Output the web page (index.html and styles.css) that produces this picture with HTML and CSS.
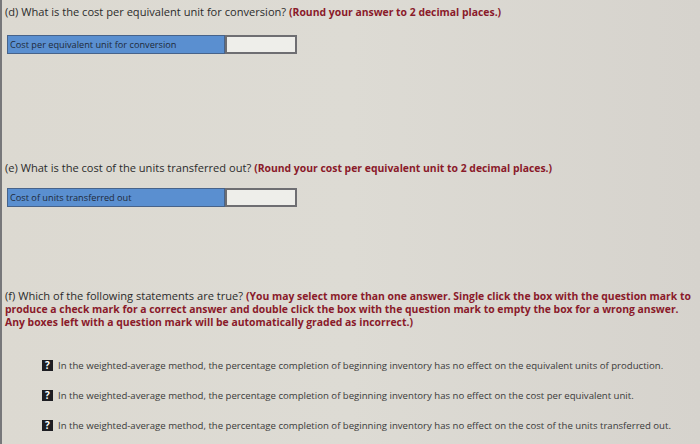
FILE: index.html
```html
<!DOCTYPE html>
<html>
<head>
<meta charset="utf-8">
<link rel="stylesheet" href="styles.css">
</head>
<body>
<div class="page">
  <section class="part part-d">
    <p class="q">(d) What is the cost per equivalent unit for conversion? <b class="note">(Round your answer to 2 decimal places.)</b></p>
    <div class="answer"><div class="label">Cost per equivalent unit for conversion</div><div class="field"></div></div>
  </section>
  <section class="part part-e">
    <p class="q">(e) What is the cost of the units transferred out? <b class="note">(Round your cost per equivalent unit to 2 decimal places.)</b></p>
    <div class="answer"><div class="label">Cost of units transferred out</div><div class="field"></div></div>
  </section>
  <section class="part part-f">
    <p class="q">(f) Which of the following statements are true? <b class="note">(You may select more than one answer. Single click the box with the question mark to produce a check mark for a correct answer and double click the box with the question mark to empty the box for a wrong answer. Any boxes left with a question mark will be automatically graded as incorrect.)</b></p>
    <ul class="choices">
      <li><span class="qbox">?</span>In the weighted-average method, the percentage completion of beginning inventory has no effect on the equivalent units of production.</li>
      <li><span class="qbox">?</span>In the weighted-average method, the percentage completion of beginning inventory has no effect on the cost per equivalent unit.</li>
      <li><span class="qbox">?</span>In the weighted-average method, the percentage completion of beginning inventory has no effect on the cost of the units transferred out.</li>
    </ul>
  </section>
</div>
</body>
</html>
```
FILE: styles.css
```css
html, body {
  margin: 0;
  padding: 0;
}
body {
  width: 700px;
  height: 444px;
  overflow: hidden;
  background: linear-gradient(90deg, #dcd9d1 0%, #dddbd4 50%, #d6d3cd 100%);
  font-family: "Open Sans", "Liberation Sans", sans-serif;
  color: #2b2b2b;
}
.page {
  height: 444px;
  border-left: 2px solid #77777a;
  padding-left: 3px;
  box-sizing: border-box;
}
.q {
  margin: 0;
  font-size: 11.1px;
  line-height: 13px;
  letter-spacing: 0;
}
.note {
  color: #8a1a2a;
  font-weight: 700;
  font-size: 10.4px;
  line-height: 11px;
}
.part-d { padding-top: 5px; }
.part-e { padding-top: 107px; }
.part-f { padding-top: 82px; }
.part-d .answer { margin-top: 17px; }
.part-e .answer { margin-top: 14px; }
.answer {
  display: flex;
  width: 290px;
  height: 19px;
  margin-left: 2px;
  box-sizing: border-box;
}
.label {
  width: 218px;
  background: #5a8fd0;
  border: 1px solid #47638a;
  box-sizing: border-box;
  font-size: 9.2px;
  line-height: 17px;
  padding-left: 2px;
  color: #1e2a3a;
}
.field {
  flex: 1;
  background: #eeeeea;
  border: 2px solid #6e6e72;
  box-sizing: border-box;
}
.choices {
  list-style: none;
  margin: 31px 0 0 0;
  padding: 0 0 0 37px;
  display: flex;
  flex-direction: column;
  gap: 17px;
}
.choices li {
  display: flex;
  align-items: center;
  font-size: 9.6px;
  line-height: 13px;
  color: #3a3a3a;
  white-space: nowrap;
}
.qbox {
  width: 11px;
  height: 11px;
  background: #1d1d22;
  color: #fff;
  font-weight: 700;
  font-size: 10px;
  line-height: 11px;
  text-align: center;
  margin-right: 5px;
  flex: none;
}
```
